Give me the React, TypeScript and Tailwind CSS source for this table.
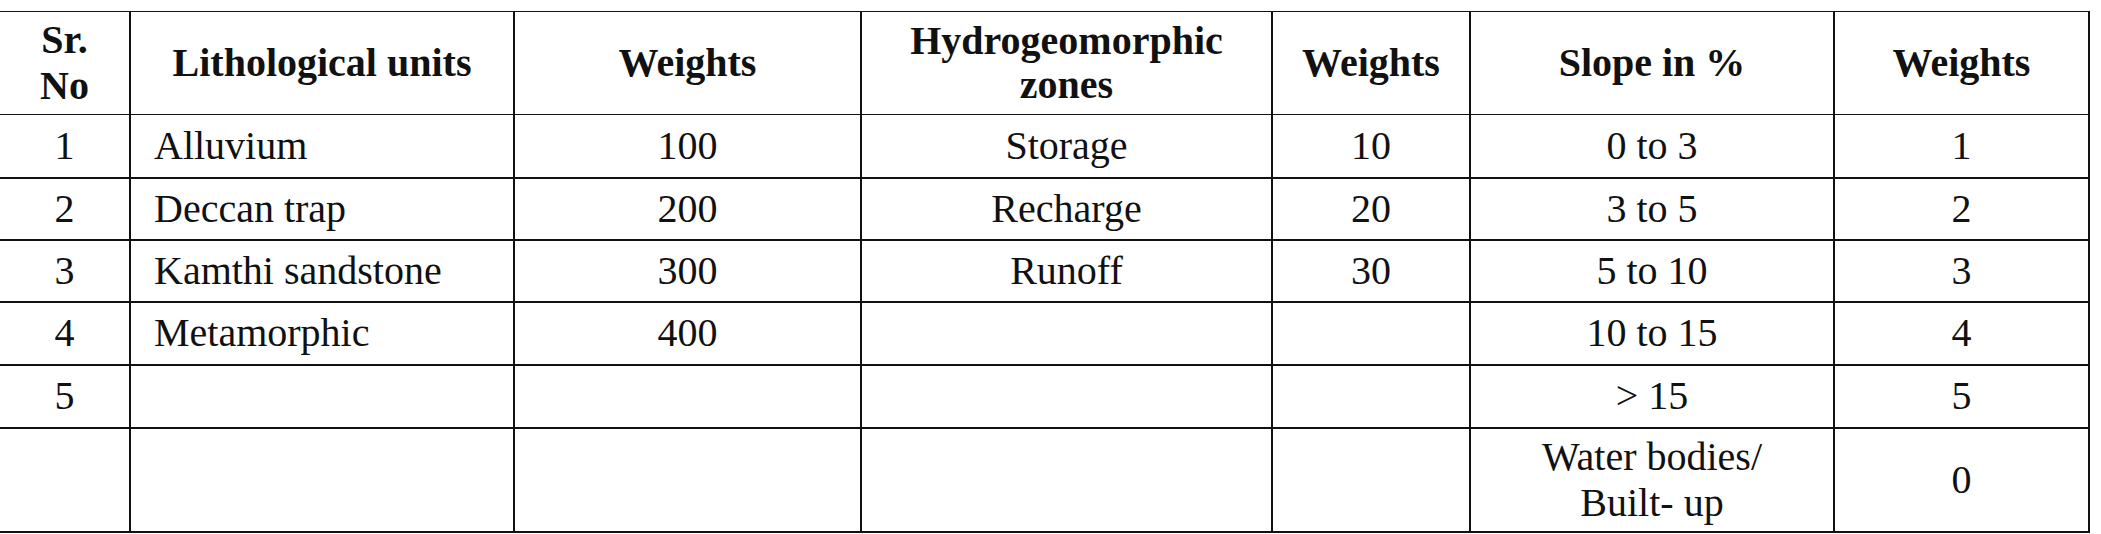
import React from "react";

const rows: string[][] = [
  ["1", "Alluvium", "100", "Storage", "10", "0 to 3", "1"],
  ["2", "Deccan trap", "200", "Recharge", "20", "3 to 5", "2"],
  ["3", "Kamthi sandstone", "300", "Runoff", "30", "5 to 10", "3"],
  ["4", "Metamorphic", "400", "", "", "10 to 15", "4"],
  ["5", "", "", "", "", "> 15", "5"],
];

const heights = ["h-[63px]", "h-[62px]", "h-[62px]", "h-[63px]", "h-[63px]"];

export default function App() {
  const cell = "border-b-2 border-r-2 border-[#111] align-middle";
  return (
    <div className="bg-white w-[2101px] h-[534px] pt-[11px] font-['Liberation_Serif','Times_New_Roman',serif] text-[40px] leading-[1.15] text-[#111]">
      <table className="table-fixed border-collapse w-[2089px] border-t border-[#111]">
        <colgroup>
          <col className="w-[130px]" />
          <col className="w-[384px]" />
          <col className="w-[347px]" />
          <col className="w-[411px]" />
          <col className="w-[198px]" />
          <col className="w-[364px]" />
          <col className="w-[255px]" />
        </colgroup>
        <thead>
          <tr className="h-[103px] font-bold text-center">
            <th className={"border-b border-r-2 border-[#111] align-middle font-bold"}>
              Sr.
              <br />
              No
            </th>
            <th className="border-b border-r-2 border-[#111] align-middle font-bold">Lithological units</th>
            <th className="border-b border-r-2 border-[#111] align-middle font-bold">Weights</th>
            <th className="border-b border-r-2 border-[#111] align-middle font-bold leading-[1.1]">
              Hydrogeomorphic
              <br />
              zones
            </th>
            <th className="border-b border-r-2 border-[#111] align-middle font-bold">Weights</th>
            <th className="border-b border-r-2 border-[#111] align-middle font-bold">Slope in %</th>
            <th className="border-b border-r-2 border-[#111] align-middle font-bold">Weights</th>
          </tr>
        </thead>
        <tbody>
          {rows.map((r, i) => (
            <tr key={i} className={heights[i]}>
              {r.map((v, j) => (
                <td
                  key={j}
                  className={
                    cell + (j === 1 ? " text-left pl-[23px]" : " text-center")
                  }
                >
                  {v}
                </td>
              ))}
            </tr>
          ))}
          <tr className="h-[104px]">
            <td className={cell}></td>
            <td className={cell}></td>
            <td className={cell}></td>
            <td className={cell}></td>
            <td className={cell}></td>
            <td className={cell + " text-center"}>
              Water bodies/
              <br />
              Built- up
            </td>
            <td className={cell + " text-center"}>0</td>
          </tr>
        </tbody>
      </table>
    </div>
  );
}
